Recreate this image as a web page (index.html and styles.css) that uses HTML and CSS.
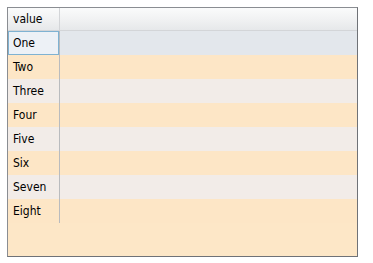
FILE: index.html
```html
<!DOCTYPE html>
<html>
<head>
<meta charset="utf-8">
<link rel="stylesheet" href="styles.css">
</head>
<body>
<div class="grid">
  <div class="header">
    <div class="hcell first">value</div>
    <div class="hcell rest"></div>
  </div>
  <div class="row selected"><div class="cell focus">One</div><div class="fill"></div></div>
  <div class="row alt"><div class="cell">Two</div><div class="fill"></div></div>
  <div class="row"><div class="cell">Three</div><div class="fill"></div></div>
  <div class="row alt"><div class="cell">Four</div><div class="fill"></div></div>
  <div class="row"><div class="cell">Five</div><div class="fill"></div></div>
  <div class="row alt"><div class="cell">Six</div><div class="fill"></div></div>
  <div class="row"><div class="cell">Seven</div><div class="fill"></div></div>
  <div class="row alt"><div class="cell">Eight</div><div class="fill"></div></div>
</div>
</body>
</html>
```
FILE: styles.css
```css
html, body {
  margin: 0;
  padding: 0;
  background: #ffffff;
}
body {
  padding: 7px;
  font-family: "DejaVu Sans Condensed", "DejaVu Sans", sans-serif;
  font-size: 12px;
  color: #000;
}
.grid {
  box-sizing: border-box;
  width: 351px;
  height: 250px;
  border: 1px solid #8a8d92;
  border-right-color: #6f7277;
  border-bottom-color: #6f7277;
  background: #fde7c7;
  display: flex;
  flex-direction: column;
}
.header {
  display: flex;
  height: 23px;
  box-sizing: border-box;
  border-bottom: 1px solid #d3d5d8;
  background: linear-gradient(#fafbfb, #f1f2f3 50%, #e6e8ea);
}
.hcell {
  box-sizing: border-box;
  padding-left: 5px;
  line-height: 22px;
}
.hcell.first {
  width: 52px;
  border-right: 1px solid #d3d5d8;
}
.hcell.rest {
  flex: 1;
}
.row {
  display: flex;
  height: 24px;
  background: #f2ece8;
}
.row.alt {
  background: #fde6c6;
}
.row.selected {
  background: #e3e7ec;
}
.cell {
  box-sizing: border-box;
  width: 52px;
  padding-left: 5px;
  line-height: 24px;
  border-right: 1px solid #b9bbbe;
}
.fill {
  flex: 1;
}
.cell.focus {
  border: 1px solid #7fb2d2;
  background: #edf1f6;
  padding-left: 4px;
  line-height: 22px;
  width: 51px;
  margin-right: 1px;
  position: relative;
}
.row.selected .fill {
  border-left: 1px solid #b9bbbe;
  margin-left: -1px;
}
```
